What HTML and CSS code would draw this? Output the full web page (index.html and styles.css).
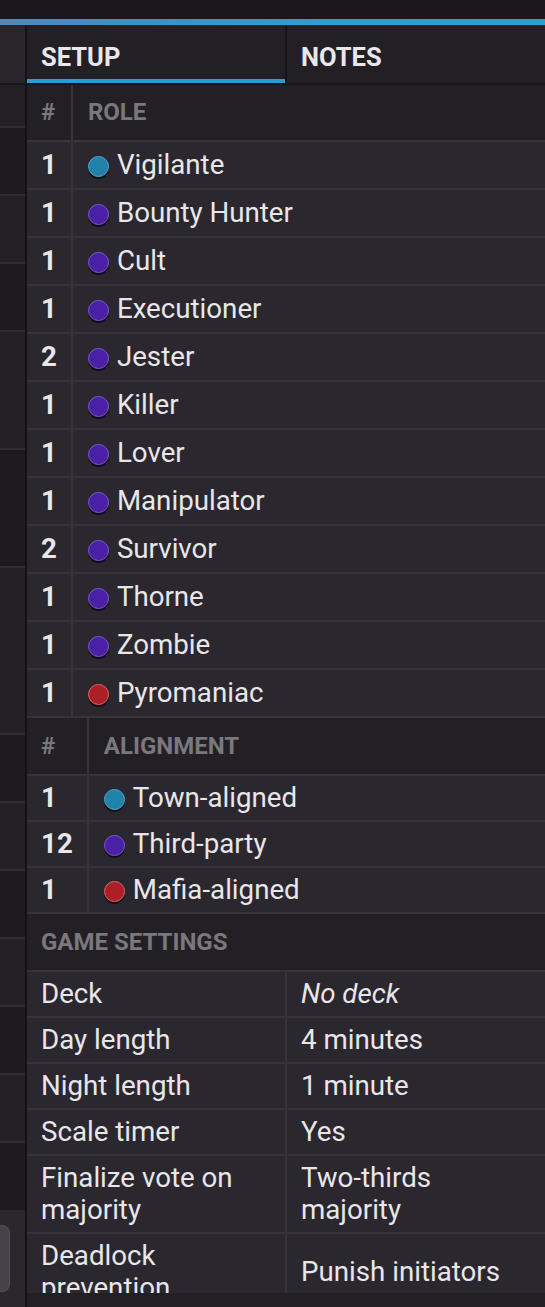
FILE: index.html
```html
<!DOCTYPE html>
<html lang="en">
<head>
<meta charset="utf-8">
<title>Setup</title>
<link rel="stylesheet" href="styles.css">
</head>
<body>
<div class="app">
  <div class="topbar"></div>
  <div class="accent"></div>
  <div class="main">
    <aside class="sidebar">
      <div class="side-head"></div>
      <div class="side-list">
        <div class="srow light s-top"></div>
        <div class="srow dark s1"></div>
        <div class="srow light s1"></div>
        <div class="srow dark s1"></div>
        <div class="srow light s2"></div>
        <div class="srow dark s2"></div>
        <div class="srow light s3"></div>
        <div class="srow dark s1"></div>
        <div class="srow light s1"></div>
        <div class="srow dark s1"></div>
        <div class="srow light s1"></div>
        <div class="srow dark s1"></div>
        <div class="srow light s1"></div>
        <div class="srow dark s-last"></div>
      </div>
      <div class="side-foot"><div class="side-btn"></div></div>
    </aside>
    <div class="divider"></div>
    <section class="panel">
      <nav class="tabs">
        <div class="tab active">SETUP</div>
        <div class="tab-sep"></div>
        <div class="tab">NOTES</div>
      </nav>
      <div class="tabs-shadow"></div>
      <div class="scroll">
        <table class="grid roles">
          <thead>
            <tr><th class="num">#</th><th>ROLE</th></tr>
          </thead>
          <tbody>
            <tr><td class="num">1</td><td><span class="dot town"></span>Vigilante</td></tr>
            <tr><td class="num">1</td><td><span class="dot third"></span>Bounty Hunter</td></tr>
            <tr><td class="num">1</td><td><span class="dot third"></span>Cult</td></tr>
            <tr><td class="num">1</td><td><span class="dot third"></span>Executioner</td></tr>
            <tr><td class="num">2</td><td><span class="dot third"></span>Jester</td></tr>
            <tr><td class="num">1</td><td><span class="dot third"></span>Killer</td></tr>
            <tr><td class="num">1</td><td><span class="dot third"></span>Lover</td></tr>
            <tr><td class="num">1</td><td><span class="dot third"></span>Manipulator</td></tr>
            <tr><td class="num">2</td><td><span class="dot third"></span>Survivor</td></tr>
            <tr><td class="num">1</td><td><span class="dot third"></span>Thorne</td></tr>
            <tr><td class="num">1</td><td><span class="dot third"></span>Zombie</td></tr>
            <tr><td class="num">1</td><td><span class="dot mafia"></span>Pyromaniac</td></tr>
          </tbody>
        </table>
        <table class="grid aligns">
          <thead>
            <tr><th class="num">#</th><th>ALIGNMENT</th></tr>
          </thead>
          <tbody>
            <tr><td class="num">1</td><td><span class="dot town"></span>Town-aligned</td></tr>
            <tr><td class="num">12</td><td><span class="dot third"></span>Third-party</td></tr>
            <tr><td class="num">1</td><td><span class="dot mafia"></span>Mafia-aligned</td></tr>
          </tbody>
        </table>
        <table class="grid settings">
          <colgroup><col class="c-key"><col class="c-val"></colgroup>
          <thead>
            <tr><th colspan="2">GAME SETTINGS</th></tr>
          </thead>
          <tbody>
            <tr><td class="key">Deck</td><td><em>No deck</em></td></tr>
            <tr><td class="key">Day length</td><td>4 minutes</td></tr>
            <tr><td class="key">Night length</td><td>1 minute</td></tr>
            <tr><td class="key">Scale timer</td><td>Yes</td></tr>
            <tr><td class="key">Finalize vote on majority</td><td>Two-thirds majority</td></tr>
            <tr><td class="key">Deadlock prevention</td><td>Punish initiators</td></tr>
          </tbody>
        </table>
      </div>
    </section>
  </div>
</div>
</body>
</html>
```

FILE: styles.css
```css
* { box-sizing: border-box; }

html, body {
  margin: 0;
  height: 100%;
}

body {
  background: #1a181d;
  font-family: Roboto, "Noto Sans", "Liberation Sans", sans-serif;
  color: #e8e6ea;
  overflow: hidden;
}

.app {
  height: 100vh;
  display: flex;
  flex-direction: column;
}

.topbar {
  height: 19px;
  flex: none;
  background: #1a181d;
}

.accent {
  height: 6px;
  flex: none;
  background: linear-gradient(90deg, #5787b4 0%, #3892cc 25%, #2d9bd6 60%, #2c9cd7 100%);
}

.main {
  flex: 1;
  min-height: 0;
  display: flex;
}

/* left strip (clipped list) */
.sidebar {
  width: 25px;
  flex: none;
  display: flex;
  flex-direction: column;
  background: #222025;
}

.side-head {
  height: 60px;
  flex: none;
  background: #28262b;
  border-bottom: 2px solid #17151a;
}

.side-list {
  flex: none;
  display: flex;
  flex-direction: column;
}

.srow {
  border-bottom: 2px solid #2f2d33;
}
.srow.light { background: #222025; }
.srow.dark { background: #1d1b20; }
.s-top { height: 43px; }
.s1 { height: 68px; }
.s2 { height: 118px; }
.s3 { height: 167px; }
.s-last { height: 67px; border-bottom: none; }

.side-foot {
  flex: 1;
  background: #2a282d;
  padding-top: 15px;
}

.side-btn {
  width: 10px;
  height: 67px;
  background: #45424a;
  border: 1px solid #525056;
  border-left: none;
  border-radius: 0 8px 8px 0;
}

.divider {
  width: 2px;
  flex: none;
  background: #141216;
}

/* right panel */
.panel {
  flex: 1;
  min-width: 0;
  display: flex;
  flex-direction: column;
  background: #222025;
  padding-bottom: 14px;
}

.tabs {
  flex: none;
  display: flex;
  height: 58px;
}

.tab {
  flex: 1;
  padding: 17px 14px 7px;
  line-height: 30px;
  font-size: 25.5px;
  font-weight: 700;
  color: #e9e7eb;
  background: #222025;
  border-bottom: 4px solid transparent;
}

.tab.active {
  border-bottom-color: #2d9ad6;
}

.tab-sep {
  width: 2px;
  flex: none;
  background: #151317;
}

.tabs-shadow {
  height: 2px;
  flex: none;
  background: #18161b;
}

.scroll {
  flex: 1;
  min-height: 0;
  overflow: hidden;
}

/* tables */
.grid {
  width: 100%;
  border-collapse: separate;
  border-spacing: 0;
  font-size: 27.7px;
}

.grid th,
.grid td {
  text-align: left;
  border-bottom: 2px solid #36343a;
  padding-left: 15px;
  padding-right: 14px;
}

.grid th {
  background: #222025;
  color: #7a787d;
  font-size: 24px;
  font-weight: 700;
  line-height: 56px;
  padding-top: 0;
  padding-bottom: 0;
}

.roles th {
  line-height: 55px;
}

.grid td {
  background: #2a282e;
  line-height: 32px;
  white-space: nowrap;
}

.grid .num {
  width: 1%;
  padding-left: 14px;
  padding-right: 14px;
  border-right: 2px solid #36343a;
  white-space: nowrap;
}

.grid td.num {
  font-weight: 700;
}

.roles td {
  padding-top: 7px;
  padding-bottom: 7px;
}

.aligns td {
  padding-top: 6px;
  padding-bottom: 6px;
}

.settings {
  table-layout: fixed;
}

.settings .c-key { width: 260px; }

.settings th {
  padding-left: 14px;
}

.settings td {
  white-space: normal;
  padding: 6px 14px;
}

.settings td.key {
  border-right: 2px solid #36343a;
}

.settings em {
  font-style: italic;
}

.dot {
  display: inline-block;
  width: 21px;
  height: 21px;
  border-radius: 50%;
  border: 1.5px solid;
  margin-right: 8px;
  vertical-align: -3px;
  box-shadow: 0 2px 0 #0e0d10;
}

.dot.town {
  background: #2181a9;
  border-color: #4eaad0;
}

.dot.third {
  background: #4a20a6;
  border-color: #7b5bd3;
}

.dot.mafia {
  background: #ad1e27;
  border-color: #de686e;
}
```
